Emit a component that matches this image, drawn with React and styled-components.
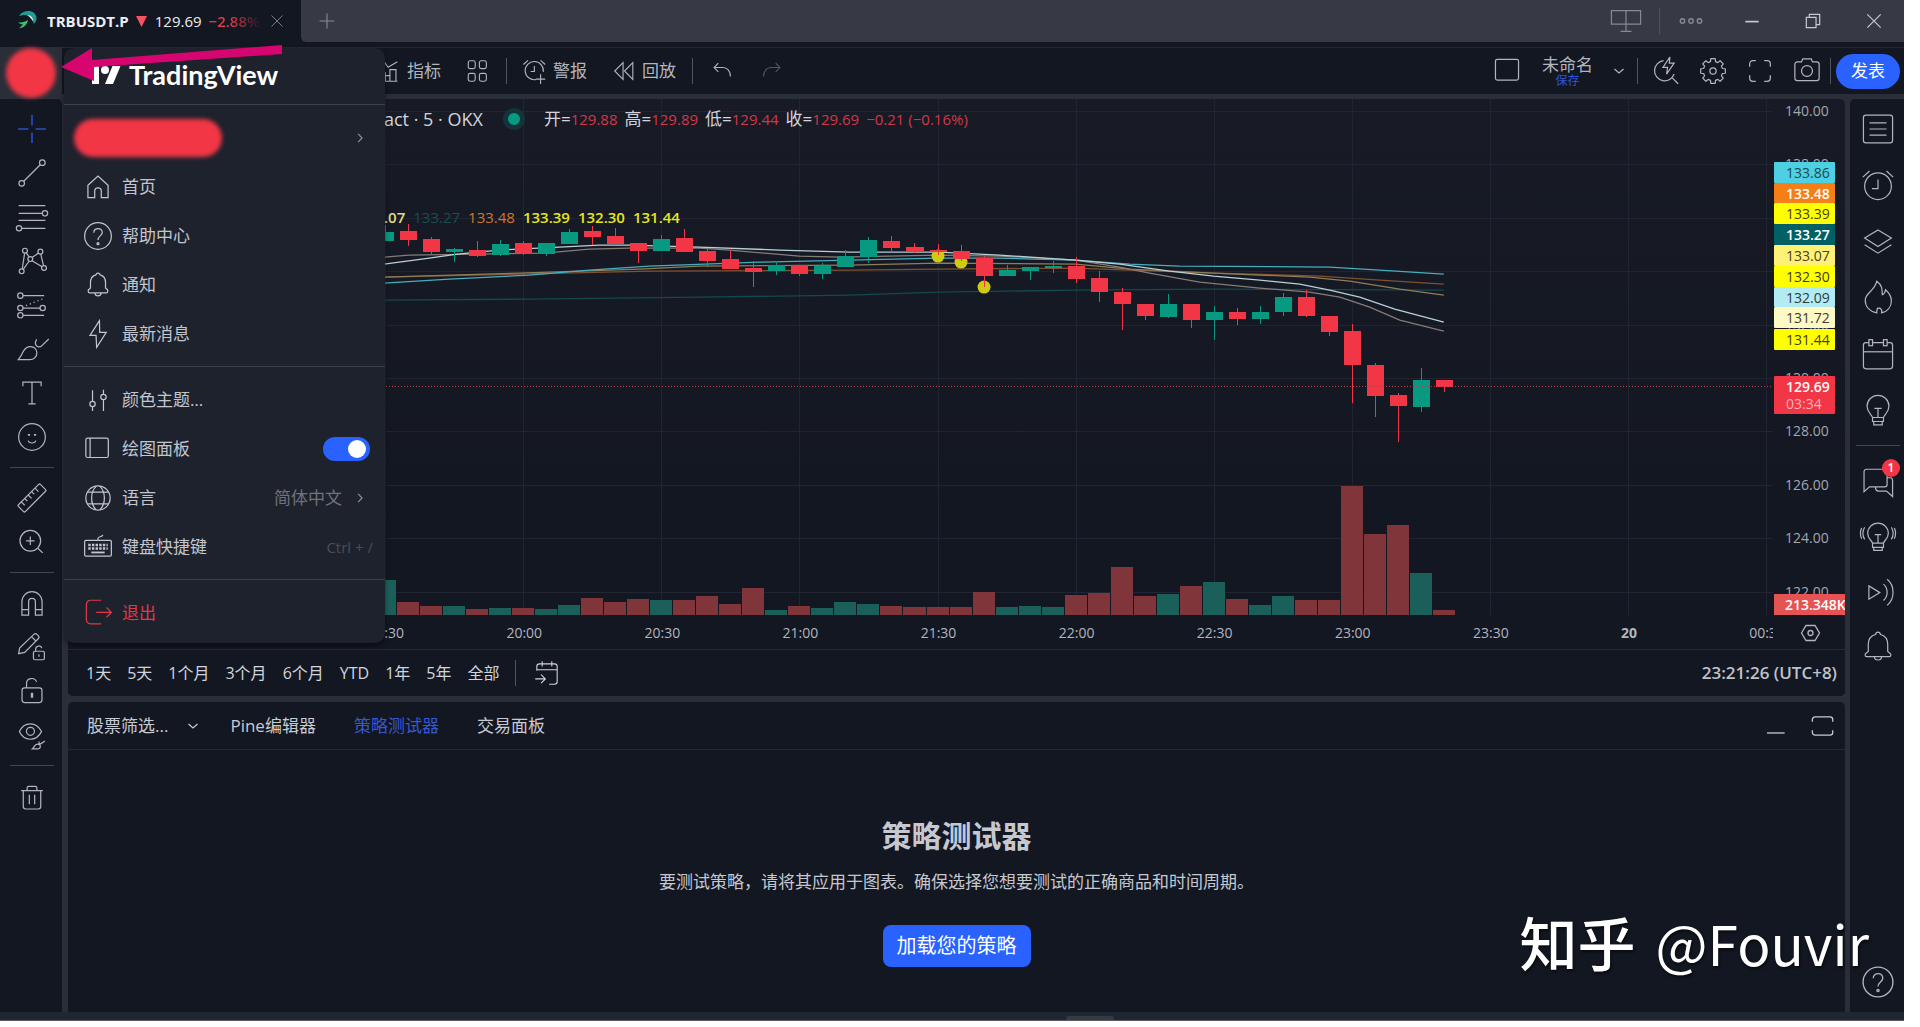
import React from "react";
import styled, { createGlobalStyle, css } from "styled-components";

const THEME = {
  bg: "#131722",
  gap: "#2a2e39",
  title: "#373a45",
  menu: "#1e222d",
  text: "#d1d4dc",
  icon: "#b2b5be",
  muted: "#787b86",
  faint: "#434651",
  blue: "#2962ff",
  red: "#f23645",
  green: "#089981",
};

const GlobalStyle = createGlobalStyle`
  * { box-sizing: border-box; }
  html, body, #root { height: 100%; }
  body {
    margin: 0;
    background: #fff;
    color: ${THEME.text};
    font-family: "Open Sans", "Noto Sans CJK SC", sans-serif;
    font-size: 17px;
    line-height: 24px;
    overflow: hidden;
  }
  button {
    margin: 0;
    padding: 0;
    border: 0;
    background: none;
    color: inherit;
    font: inherit;
    cursor: pointer;
  }
  svg { display: block; flex: none; }
`;

/* ---------- icons ---------- */

const gearPath = () => {
  const pts = [];
  for (let i = 0; i < 8; i += 1) {
    const a = (i * Math.PI) / 4 - Math.PI / 2;
    [
      [-0.26, 8],
      [-0.18, 10.3],
      [0.18, 10.3],
      [0.26, 8],
    ].forEach(([d, r]) => {
      pts.push(`${(14 + r * Math.cos(a + d)).toFixed(2)} ${(14 + r * Math.sin(a + d)).toFixed(2)}`);
    });
  }
  return `M${pts.join("L")}Z`;
};

const ICONS = {
  cross: <path strokeWidth="1.300" d="M2.500 14H11M17 14h8.500M14 2.500V11M14 17v8.500" />,
  trend: (
    <>
      <circle cx="5.500" cy="22.500" r="2.300" />
      <circle cx="22.500" cy="5.500" r="2.300" />
      <path d="M7.200 20.800 20.800 7.200" />
    </>
  ),
  fib: (
    <>
      <path d="M3 4.700h22M3 11h19.500M3 16.700h22M5.500 23.300H25" />
      <circle cx="24.700" cy="11" r="2.200" />
      <circle cx="3.300" cy="23.300" r="2.200" />
    </>
  ),
  pattern: (
    <>
      <path d="M6 20.400 7.900 7.700M9.300 7.300l2.300 3.300M14.100 11.200l5.200-3.700M21.200 8.300l2.300 9.500M11.700 14l-4.900 6.900M14 13.800l8.300 5" />
      <circle cx="8.200" cy="5.500" r="2" />
      <circle cx="20.900" cy="6.300" r="2" />
      <circle cx="12.600" cy="12.400" r="2" />
      <circle cx="5.500" cy="22.500" r="2" />
      <circle cx="23.900" cy="19.800" r="2" />
    </>
  ),
  forecast: (
    <>
      <path d="M6.600 6.300H24M6.600 16.500h14M6.600 22.500H24" />
      <path strokeDasharray="1 2.400" d="M9 14.500 24 8.500" />
      <circle cx="4.400" cy="6.300" r="2.200" />
      <circle cx="4.400" cy="16.500" r="2.200" />
      <circle cx="22.800" cy="16.500" r="2.200" />
      <circle cx="4.400" cy="22.500" r="2.200" />
    </>
  ),
  brush: (
    <path d="M2.700 22.800h9.500c3.500 0 5.800-2.600 5.800-5.600s-2.200-5.200-5.200-5.200-5 1.800-6.300 4.500c-.8 1.700-2 4.300-3.800 6.300zM27.800 5.800l-6.300 6c-1.500 1.200-4 .2-4.600-1.700-.4-1.600 0-2.600 1-4" />
  ),
  text: <path d="M6.500 8.500V5h15v3.500M14 5v18M11 23h6" />,
  smile: (
    <>
      <circle cx="14" cy="14" r="11" />
      <path d="M10.800 17c.9 2.600 5.500 2.600 6.400 0" />
      <path strokeWidth="1.800" d="M11.500 11.500v1.400M16.500 11.500v1.400" />
    </>
  ),
  ruler: (
    <g transform="rotate(-45 14 14)">
      <rect x="1.200" y="10" width="25.600" height="8" rx="1" />
      <path d="M5.500 10v4M9.500 10v3M13.500 10v4M17.500 10v3M21.500 10v4" />
    </g>
  ),
  zoom: (
    <>
      <circle cx="12.600" cy="13" r="8.500" />
      <path d="M12.600 9.500v7M9.100 13h7M18.800 19.200l4 3.800" />
    </>
  ),
  magnet: (
    <path d="M5.700 24V13a8.300 8.300 0 0 1 16.600 0v11h-5.500V13a2.800 2.800 0 0 0-5.600 0v11zM5.700 19.500h5.500M16.800 19.500h5.500" />
  ),
  pencilLock: (
    <>
      <path d="M3 19.500l.8-4.700L15.500 3.600c.8-.8 1.800-.8 2.600 0l1 1c.8.800.8 1.800 0 2.600L8 18.500zM13.600 5.500l3.600 3.600" />
      <rect x="15.200" y="17.500" width="9" height="7" rx="1.200" />
      <path d="M17 17.500v-1.800c0-3 4.500-3.400 5-.8M19.700 20v2" />
    </>
  ),
  lock: (
    <>
      <rect x="5.800" y="11.500" width="16.400" height="12" rx="2" />
      <path d="M9.500 11.500V7.800c0-4.700 6.800-5.600 8.300-1.300" />
      <path strokeWidth="2" d="M14 15.500v4" />
    </>
  ),
  eye: (
    <>
      <path d="M3.600 11.200C7.500 2.600 17.500 2.600 21.800 11.200 17.500 19.600 7.500 19.600 3.600 11.200z" />
      <circle cx="12.700" cy="11" r="3.300" />
      <path d="M14.300 25.500h4.200c3 0 3.200-4 .2-4s-2.500 2.500-4.400 4zM24.600 19l-3.400 2.300c-1 .3-1.900-.7-1.200-2" />
    </>
  ),
  trash: (
    <path d="M5 9.500h18M10 9.500V7.300c0-.8.500-1.300 1.300-1.300h5.400c.8 0 1.300.5 1.300 1.300v2.200M6.800 9.500v13.200c0 1.200.8 2 2 2h10.400c1.200 0 2-.8 2-2V9.500M11.800 13v7.800M16.200 13v7.800" />
  ),
  home: <path d="M5.700 12.500 14 5l8.300 7.500v10.200h-5.600v-5.400c0-3.400-5.400-3.400-5.400 0v5.400H5.700z" />,
  help: (
    <>
      <circle cx="14" cy="14" r="11" />
      <path d="M10.500 11.300c0-4.700 7.300-4.500 7 0-.2 2.600-3.500 2.800-3.500 6" />
      <circle cx="14" cy="20.300" r=".8" />
    </>
  ),
  bell: (
    <path d="M6 19.500v-1.300l1.800-1.700V12c0-3.500 1.800-5.700 4.500-6.400.3-1.900 3.100-1.900 3.400 0 2.700.7 4.500 2.900 4.500 6.400v4.500l1.800 1.700v1.300c0 .8-.5 1-1 1H7c-.6 0-1-.2-1-1zM11.500 21c.3 2.600 4.700 2.600 5 0" />
  ),
  flash: <path d="M15.200 3 7.400 15.200h5L12.900 25l7.900-12.400h-5.400z" />,
  sliders: (
    <>
      <path d="M9.500 6v9M9.500 19.500V23M18.500 5.500v4M18.500 13.500v9.500" />
      <circle cx="9.500" cy="17.300" r="2.200" />
      <circle cx="18.500" cy="11.500" r="2.200" />
    </>
  ),
  panel: (
    <>
      <rect x="4" y="5" width="18.500" height="16" rx="1.500" />
      <path d="M7.500 5v16" />
    </>
  ),
  globe: (
    <>
      <circle cx="14" cy="14" r="10" />
      <path d="M12.500 4.200c-5 5-5 14.600 0 19.600M15.500 4.200c5 5 5 14.600 0 19.600M5.500 9.200h17M5.500 18.800h17" />
    </>
  ),
  keyboard: (
    <>
      <rect x="3" y="8.500" width="22" height="13" rx="1" />
      <path d="M14 8.500V7c0-2 3.500-.8 4-3" />
      <path strokeWidth="2" strokeDasharray="2 1" d="M6 12.300h16M6 15.200h16" />
      <path strokeWidth="1.500" d="M8.500 18.500h11" />
    </>
  ),
  logout: <path d="M16.500 3.500H8A3.600 3.600 0 0 0 4.400 7.100v12.300A3.600 3.600 0 0 0 8 23h8.500M12.500 13.500H25M21 9.500l4 4-4 4" />,
  indicators: (
    <path d="M2 8.500 8.500 3.500 13 10 23 4M5 25v-9h5v9M10 25v-6h5v6M15 25V12.500h6.500V25M3.500 25H23" />
  ),
  templates: (
    <>
      <rect x="3.500" y="3" width="7.500" height="8.500" rx="2" />
      <rect x="15.500" y="3" width="7.500" height="8.500" rx="2" />
      <rect x="3.500" y="16.500" width="7.500" height="8.500" rx="2" />
      <rect x="15.500" y="16.500" width="7.500" height="8.500" rx="2" />
    </>
  ),
  alertAdd: (
    <path d="M15 23.200A9.800 9.800 0 1 1 22.900 15M13.300 8.500v6h-4M20 17.500V28M15 22.700h10M1.500 7 6.500 2.500M20 2.500 25 7" />
  ),
  rewind: <path d="M13 5v18L4 14zM23.500 5v18L14.500 14z" />,
  undo: <path d="M10 5.500 5.500 10.300 10 15M5.500 10.300H15c4.500 0 8 3.500 8 9.500" />,
  redo: <path d="M18 5.500l4.500 4.800L18 15M22.500 10.300H13c-4.500 0-8 3.500-8 9.500" />,
  layout: <rect x="4.500" y="4.500" width="19" height="17" rx="1.500" />,
  chevDown: <path d="M9.500 12l4.500 4 4.500-4" />,
  chevRight: <path d="M12 9.500l4.200 4.500-4.200 4.500" />,
  quickSearch: (
    <path d="M12 5.500a8.300 8.300 0 1 0 8.700 11M19 19.500l5 5M17.200 2.500l-5.700 8.500h3.800l-.8 5.500 6.200-9h-4z" />
  ),
  gear: (
    <>
      <path strokeLinejoin="round" d={gearPath()} />
      <circle cx="14" cy="14" r="2.600" />
    </>
  ),
  fullscreen: (
    <path d="M5.500 10.500V8A2.500 2.500 0 0 1 8 5.500h2.500M17.500 5.500H20A2.500 2.500 0 0 1 22.500 8v2.500M22.500 17.500V20a2.500 2.500 0 0 1-2.500 2.500h-2.500M10.500 22.500H8A2.500 2.500 0 0 1 5.500 20v-2.500" />
  ),
  camera: (
    <>
      <path d="M9.500 6.500l1-2.500h7l1 2.500H22a2 2 0 0 1 2 2V20a2 2 0 0 1-2 2H6a2 2 0 0 1-2-2V8.500a2 2 0 0 1 2-2z" />
      <circle cx="14" cy="14" r="4.500" />
    </>
  ),
  watchlist: (
    <>
      <rect x="2" y="2.500" width="24" height="23" rx="2" />
      <path d="M7 9h14M7 14h14M7 19h14" />
    </>
  ),
  alarm: (
    <>
      <circle cx="14" cy="15" r="11" />
      <path d="M14 9.500V17H9M1.500 7.500 7 2.500M21 2.500l5.500 5" />
    </>
  ),
  layers: <path d="M14 5 25 11.500 14 18.500 3 11.500zM3 17l11 7 11-7" />,
  fire: (
    <path d="M13 27C7 26 3.500 22 3.500 16.500c0-6 8-7.500 9.500-15.500 4.500 3 4.500 7 4.500 11 1.500-.5 2.500-2 2.700-4C23 10.500 25 13 25 17c0 5.500-3.500 9-8 10 .5-1.500 0-3-1.500-4-1 1-1.800-.5-2 .500-.3 1-.7 2-.5 3.500z" />
  ),
  calendar: (
    <>
      <rect x="2" y="5.500" width="24" height="21.500" rx="2" />
      <path d="M2 13h24" />
      <rect x="6.500" y="3" width="3" height="5" fill="#131722" />
      <rect x="18.500" y="3" width="3" height="5" fill="#131722" />
    </>
  ),
  bulb: (
    <path d="M9.500 21c-.5-2.500-4.500-4-4.500-9.300a9 9 0 0 1 18 0c0 5.300-4 6.800-4.500 9.300zM9.500 21v3.300h9V21M10.500 24.500V27h7v-2.500M14 20.500v-7M11 13.500h6" />
  ),
  chat: (
    <path d="M2.500 22V5.500C2.500 4.500 3.500 3.500 4.500 3.500h15c1.300 0 2 .8 2 2V16c0 1.300-.8 2-2 2H7zM12 18v1c0 1.500 1 2.500 2.500 2.500H21l5 4.500V12.500c0-1-.8-1.800-2-2h-2.500" />
  ),
  ideas: (
    <path d="M9.500 19c-.5-2-4-3.500-4-8a8.500 8.500 0 0 1 17 0c0 4.500-3.500 6-4 8zM9.500 19v3.500h9V19M10.500 22.500V25h7v-2.500M14 18.500V12M11.300 12h5.400M3 6c-1.800 3-1.800 7 0 10M.5 6.500c-1.300 3-1.300 6 0 9M25 6c1.800 3 1.800 7 0 10M27.500 6.500c1.300 3 1.300 6 0 9" />
  ),
  stream: <path d="M6.500 9v11l9-5.500zM18.500 7.500c4 3.500 4 10 0 13.500M21.500 3.500c6.500 5 6.500 16.500 0 21.500" />,
  bigBell: (
    <path d="M3.500 21v-1.300l2.500-2V12c0-4.500 2.500-7.500 6-8.300.3-2.600 3.700-2.600 4 0 3.500.8 6 3.800 6 8.300v5.700l2.500 2V21c0 .7-.5 1-1 1h-19c-.6 0-1-.3-1-1zM11 22c.3 3.600 5.700 3.600 6 0" />
  ),
  goTo: (
    <path d="M4.500 12V8c0-1.500 1-2.500 2.500-2.500h14c1.500 0 2.500 1 2.500 2.500v14c0 1.500-1 2.500-2.500 2.500h-5M9.500 3v5M18.500 3v5M4.500 11h19M3 19.500h9M8.500 15.500l4 4-4 4" />
  ),
  minimize: <path d="M6.500 20.500H23" />,
  maximize: <path d="M5 10V8a2.500 2.500 0 0 1 2.500-2.500h14A2.500 2.500 0 0 1 24 8v2M24 18v2a2.500 2.500 0 0 1-2.500 2.500h-14A2.500 2.500 0 0 1 5 20v-2" />,
  close: <path d="M8.500 8.500l11 11M19.500 8.500l-11 11" />,
  plus: <path d="M14 7.500v13M7.500 14h13" />,
  screens: <path d="M2 5.500h24v11H2zM14 5.500V22.500M9.500 22.500h9" />,
  dots: (
    <>
      <circle cx="5.500" cy="14" r="2.200" />
      <circle cx="14" cy="14" r="2.200" />
      <circle cx="22.500" cy="14" r="2.200" />
    </>
  ),
  winMin: <path d="M8.500 14.500h11" />,
  winRestore: <path d="M8.500 11h8v8.500h-8zM11 11V8.500h8.500V17h-3" />,
};

const Icon = ({ name, size = 34, stroke = 1 }) => (
  <svg
    width={size}
    height={size}
    viewBox="0 0 28 28"
    fill="none"
    stroke="currentColor"
    strokeWidth={stroke}
    overflow="visible"
    aria-hidden="true"
  >
    {ICONS[name]}
  </svg>
);

/* ---------- shell ---------- */

const Shell = styled.div`
  position: relative;
  display: flex;
  flex-direction: column;
  width: calc(100% - 16px);
  height: calc(100% - 6px);
  background: ${THEME.bg};
  overflow: hidden;
`;

const TitleBar = styled.header`
  display: flex;
  height: 42px;
  margin-bottom: 5px;
  flex: none;
`;

const Tab = styled.div`
  display: flex;
  align-items: center;
  width: 301px;
  padding: 0 10px 0 16px;
  background: ${THEME.bg};
  color: #eceef2;
  font-size: 15px;

  b {
    margin: 0 7px 0 9px;
  }

  button {
    margin-left: auto;
    color: ${THEME.muted};
  }
`;

const TabPrice = styled.span`
  margin: 0 7px 0 8px;
`;

const TabChange = styled.span`
  font-weight: 600;
  background: linear-gradient(90deg, #e03c4a 40%, #131722 105%);
  background-clip: text;
  color: transparent;
`;

const TitleRest = styled.div`
  display: flex;
  flex: 1;
  align-items: center;
  background: ${THEME.title};
  border-bottom-left-radius: 5px;
  color: #868993;
`;

const WindowButton = styled.button`
  display: grid;
  place-items: center;
  width: ${(p) => p.$width || 61}px;
  height: 42px;
  color: ${(p) => (p.$bright ? "#c5c8d0" : "inherit")};
  margin-left: ${(p) => (p.$push ? "auto" : 0)};
`;

const VLine = styled.span`
  flex: none;
  width: 1px;
  height: 26px;
  margin: 0 ${(p) => p.$gap || 0}px;
  background: #50535e;
`;

const Workspace = styled.div`
  display: grid;
  grid-template-columns: 62px 1fr;
  column-gap: 6px;
  flex: 1;
  min-height: 0;
  background: ${THEME.gap};
`;

/* ---------- side rails ---------- */

const LeftRail = styled.aside`
  display: flex;
  flex-direction: column;
  min-height: 0;
`;

const Avatar = styled.button`
  display: grid;
  place-items: center;
  height: 52px;
  flex: none;

  &::before {
    content: "";
    width: 50px;
    height: 50px;
    border-radius: 25px;
    background: ${THEME.red};
    filter: blur(2px);
  }
`;

const RailBody = styled.nav`
  display: flex;
  flex: 1;
  flex-direction: column;
  align-items: center;
  min-height: 0;
  padding: ${(p) => p.$top}px 0 0 2px;
  background: ${THEME.bg};
  border-radius: ${(p) => p.$radius};
  color: ${THEME.icon};
`;

const RailButton = styled.button`
  position: relative;
  display: grid;
  place-items: center;
  width: 100%;
  height: ${(p) => p.$height || 44}px;
  flex: none;
  color: ${(p) => (p.$active ? "#2c4fc4" : "inherit")};
  margin-top: ${(p) => (p.$bottom ? "auto" : 0)};
`;

const RailLine = styled.hr`
  width: 44px;
  height: 1px;
  flex: none;
  margin: 8px 0;
  border: 0;
  background: ${THEME.faint};
`;

const Badge = styled.span`
  position: absolute;
  top: 5px;
  right: 4px;
  width: 18px;
  height: 18px;
  border-radius: 9px;
  background: ${THEME.red};
  color: #fff;
  font-size: 12px;
  font-weight: 600;
  line-height: 18px;
`;

/* ---------- toolbar ---------- */

const Main = styled.div`
  display: flex;
  flex-direction: column;
  min-width: 0;
  min-height: 0;
`;

const Toolbar = styled.div`
  display: flex;
  align-items: center;
  height: 47px;
  flex: none;
  margin-bottom: 5px;
  margin-left: -6px;
  padding: 0 4px 0 302px;
  border-top: 1px solid #242833;
  background: ${THEME.bg};
  color: ${THEME.icon};
`;

const ToolButton = styled.button`
  display: flex;
  align-items: center;
  gap: 5px;
  padding: 0 12px;
  opacity: ${(p) => (p.$dim ? 0.4 : 1)};
`;

const IconButton = styled.button`
  display: grid;
  place-items: center;
  width: 47px;
  height: 46px;
`;

const Spacer = styled.span`
  flex: 1;
`;

const LayoutName = styled.button`
  display: flex;
  flex-direction: column;
  align-items: center;
  margin: 0 12px;
  line-height: 19px;

  small {
    color: #2f56d6;
    font-size: 12px;
    line-height: 13px;
  }
`;

const Publish = styled.button`
  width: 64px;
  height: 35px;
  margin-left: 5px;
  border-radius: 18px;
  background: ${THEME.blue};
  color: #fff;
`;

/* ---------- chart ---------- */

const Columns = styled.div`
  display: grid;
  grid-template-columns: minmax(0, 1fr) 54px;
  column-gap: 5px;
  flex: 1;
  min-height: 0;
`;

const Center = styled.div`
  display: flex;
  flex-direction: column;
  gap: 6px;
  min-height: 0;
`;

const ChartPanel = styled.section`
  flex: none;
  border-radius: 5px;
  overflow: hidden;
  background: linear-gradient(#181b26, #131722 70%);
`;

const ChartBody = styled.div`
  position: relative;
  display: grid;
  grid-template-columns: minmax(0, 1fr) 72px;
  height: 550px;
`;

const Legend = styled.div`
  position: absolute;
  left: 316px;
  top: 8px;
  display: flex;
  align-items: center;
`;

const SymbolName = styled.span`
  font-size: 18px;
  font-weight: 500;
`;

const LiveDot = styled.i`
  width: 22px;
  height: 22px;
  margin: 0 19px 0 20px;
  border: 5px solid #14343b;
  border-radius: 11px;
  background: ${THEME.green};
`;

const Ohlc = styled.span`
  margin-right: 7px;

  em {
    color: #d23746;
    font-size: 15px;
    font-style: normal;
  }
`;

const Averages = styled(Legend)`
  top: 106px;
  gap: 8px;
  font-size: 15px;
`;

const Average = styled.span`
  color: ${(p) => p.$color};
  font-weight: ${(p) => p.$weight};
`;

const RangeBar = styled.div`
  display: flex;
  align-items: center;
  gap: 16px;
  height: 47px;
  padding: 0 8px 0 18px;
  border-top: 1px solid #262a35;
  background: ${THEME.bg};
  font-size: 16px;
`;

const Clock = styled.button`
  margin-left: auto;
  color: #bfc2cb;
  font-size: 17px;
  font-weight: 600;
`;

// kind, body top, body bottom, wick top, wick bottom, volume top
const BARS = [
  ["g", 232, 241, 225, 241, 580],
  ["r", 231, 240, 224, 246, 602],
  ["r", 239, 252, 237, 254, 606],
  ["g", 249, 252, 248, 262, 606],
  ["r", 250, 256, 241, 257, 609],
  ["g", 244, 255, 240, 256, 608],
  ["r", 243, 254, 241, 255, 608],
  ["g", 243, 254, 243, 256, 609],
  ["g", 232, 244, 229, 244, 605],
  ["r", 231, 237, 226, 245, 598],
  ["r", 236, 244, 228, 244, 602],
  ["r", 243, 251, 243, 263, 599],
  ["g", 239, 251, 235, 251, 600],
  ["r", 238, 252, 229, 252, 600],
  ["r", 251, 261, 249, 267, 596],
  ["r", 259, 269, 250, 269, 604],
  ["r", 268, 272, 261, 287, 588],
  ["g", 265, 271, 261, 275, 610],
  ["r", 265, 274, 265, 276, 606],
  ["g", 266, 274, 263, 279, 608],
  ["g", 256, 267, 250, 267, 602],
  ["g", 240, 257, 237, 263, 604],
  ["r", 241, 248, 236, 252, 606],
  ["r", 247, 252, 243, 253, 607],
  ["r", 250, 252, 244, 255, 607],
  ["r", 251, 259, 245, 261, 607],
  ["r", 258, 276, 256, 287, 592],
  ["g", 270, 276, 265, 276, 607],
  ["g", 267, 271, 267, 280, 606],
  ["g", 266, 268, 261, 273, 607],
  ["r", 266, 279, 257, 283, 595],
  ["r", 278, 292, 271, 302, 593],
  ["r", 292, 304, 288, 330, 567],
  ["r", 304, 316, 304, 320, 596],
  ["g", 304, 317, 294, 318, 594],
  ["r", 304, 320, 304, 328, 586],
  ["g", 312, 320, 306, 340, 582],
  ["r", 312, 319, 308, 325, 599],
  ["g", 312, 319, 306, 324, 605],
  ["g", 297, 312, 293, 316, 596],
  ["r", 297, 316, 290, 317, 600],
  ["r", 316, 332, 316, 336, 600],
  ["r", 331, 365, 324, 403, 486],
  ["r", 365, 396, 363, 417, 534],
  ["r", 395, 406, 393, 442, 525],
  ["g", 380, 407, 368, 412, 573],
  ["r", 380, 387, 380, 392, 610],
];

const LINES = [
  ["#124a4d", "385,300 530,299 700,297 850,295 939,292 1076,290 1214,289 1444,290"],
  ["#80502f", "385,277 520,274 650,271 850,270 939,269 1076,268 1130,270 1214,273 1320,276 1380,280 1444,284"],
  ["#8f7d57", "385,277 520,273 640,269 700,266 850,265 939,263 1076,264 1130,269 1214,273 1310,277 1350,281 1400,289 1444,295"],
  ["#45aebd", "385,283 450,279 530,275 590,270 650,266 760,262 850,260 939,258 1000,258 1076,260 1130,264 1180,266 1330,267 1380,270 1444,274"],
  ["#857c76", "385,257 410,255 480,254 545,253 590,249 630,248 700,248 730,250 800,256 840,257 939,255 1000,256 1076,260 1120,267 1150,273 1200,282 1260,288 1310,292 1340,297 1370,307 1400,320 1444,331"],
  ["#b7d0d6", "385,264 430,258 458,254 500,250 560,247 600,245 630,245 700,247 780,250 850,252 939,252 1000,255 1076,260 1120,264 1170,271 1214,276 1260,280 1300,284 1330,290 1360,297 1395,309 1444,322"],
];

const TIMES = ["19:30", "20:00", "20:30", "21:00", "21:30", "22:00", "22:30", "23:00", "23:30", "20", "00:30"];
const PRICES = [140, 138, 136, 134, 132, 130, 128, 126, 124, 122];
// these two sit fully behind the indicator tags
const COVERED = [136, 134];
const priceY = (price) => Math.round(111 + (140 - price) * 26.7);
const barX = (i) => 386 + i * 23;

const SIGNALS = [
  [24, 256],
  [25, 262],
  [26, 287],
];

const Plot = () => (
  <svg width="100%" height="550" viewBox="69 99 1704 550" preserveAspectRatio="xMinYMin slice">
    <g stroke="#212531" shapeRendering="crispEdges">
      {PRICES.map((p) => (
        <path key={p} d={`M69 ${priceY(p) + 0.5}H1773`} />
      ))}
      {TIMES.map((t, i) => (
        <path key={t} d={`M${386.5 + i * 138} 99V615`} />
      ))}
    </g>
    <g shapeRendering="crispEdges">
      {BARS.map(([kind, , , , , v], i) => (
        <rect key={i} x={barX(i) - 11} y={v} width="22" height={615 - v} fill={kind === "r" ? "#7f3539" : "#1b5f5b"} />
      ))}
    </g>
    {LINES.map(([color, points]) => (
      <polyline key={color} points={points} fill="none" stroke={color} strokeWidth="1.300" />
    ))}
    {SIGNALS.map(([i, y]) => (
      <circle key={i} cx={barX(i) + 0.5} cy={y} r="6.500" fill="#cfcb14" />
    ))}
    <g shapeRendering="crispEdges">
      {BARS.map(([kind, top, bottom, high, low], i) => (
        <g key={i} fill={kind === "r" ? THEME.red : THEME.green}>
          <rect x={barX(i)} y={high} width="1" height={low - high} />
          <rect x={barX(i) - 8} y={top} width="17" height={bottom - top} />
        </g>
      ))}
    </g>
    <path d="M69 386.500H1773" stroke="#b93a48" strokeDasharray="1 2" shapeRendering="crispEdges" />
    <g fill={THEME.icon} fontSize="14" textAnchor="middle">
      {TIMES.map((t, i) => (
        <text key={t} x={387 + i * 138} y="638" fontWeight={t === "20" ? 700 : 500}>
          {t}
        </text>
      ))}
    </g>
  </svg>
);

// label, top, height, background, text colour, weight
const TAGS = [
  ["133.86", 162, 21, "#4dd0e1", "#1a4a54", 500],
  ["133.48", 183, 20, "#f57f17", "#fff", 600],
  ["133.39", 203, 21, "#ffff00", "#3f3f0c", 500],
  ["133.27", 224, 21, "#006064", "#fff", 600],
  ["133.07", 245, 21, "#fff176", "#46421f", 500],
  ["132.30", 266, 21, "#ffff00", "#3f3f0c", 500],
  ["132.09", 287, 20, "#b2ebf2", "#2b3d41", 500],
  ["131.72", 307, 21, "#fff9c4", "#403e30", 500],
  ["131.44", 329, 21, "#ffff00", "#3f3f0c", 500],
];

const PriceScale = () => (
  <svg width="72" height="550" viewBox="1773 99 72 550" fontSize="14">
    <g fill="#a3a6af" fontWeight="500">
      {PRICES.filter((p) => !COVERED.includes(p)).map((p) => (
        <text key={p} x="1785" y={priceY(p) + 5}>
          {p.toFixed(2)}
        </text>
      ))}
    </g>
    {TAGS.map(([label, y, h, bg, color, weight]) => (
      <g key={label}>
        <rect x="1774" y={y} width="61" height={h} rx="1" fill={bg} />
        <text x="1786" y={y + 16} fill={color} fontWeight={weight}>
          {label}
        </text>
      </g>
    ))}
    <rect x="1774" y="376" width="61" height="38" rx="1" fill={THEME.red} />
    <text x="1786" y="392" fill="#fff" fontWeight="600">129.69</text>
    <text x="1786" y="409" fill="#fbb5bb" fontWeight="500">03:34</text>
    <rect x="1774" y="594" width="71" height="21" fill="#e65353" />
    <text x="1785" y="610" fill="#fff" fontWeight="600">213.348K</text>
    <g fill="none" stroke={THEME.icon} strokeWidth="1.300">
      <path d="M1801.500 633l4.500-7.500h9l4.500 7.500-4.500 7.500h-9z" />
      <circle cx="1810.500" cy="633" r="2.500" />
    </g>
  </svg>
);

/* ---------- bottom panel ---------- */

const BottomPanel = styled.section`
  display: flex;
  flex: 1;
  flex-direction: column;
  min-height: 0;
  border-radius: 5px 5px 0 0;
  background: ${THEME.bg};
`;

const BottomTabs = styled.div`
  display: flex;
  align-items: center;
  height: 48px;
  flex: none;
  padding: 0 0 0 19px;
  border-bottom: 1px solid #262a35;
  color: #c8cbd3;
`;

const BottomTab = styled.button`
  display: flex;
  align-items: center;
  margin-right: ${(p) => p.$gap || 38}px;
  color: ${(p) => (p.$active ? "#3558d4" : "inherit")};

  svg {
    margin-left: 11px;
  }
`;

const Empty = styled.div`
  display: flex;
  flex-direction: column;
  align-items: center;
  padding-top: 68px;

  h2 {
    margin: 0 0 16px;
    color: #c6c8d1;
    font-size: 30px;
    font-weight: 700;
    line-height: 36px;
  }

  p {
    margin: 0 0 31px;
    color: #c6c8d1;
  }

  button {
    height: 42px;
    padding: 0 14px;
    border-radius: 8px;
    background: ${THEME.blue};
    color: #fff;
    font-size: 20px;
  }
`;

const Taskbar = styled.footer`
  display: flex;
  justify-content: center;
  height: 9px;
  flex: none;
  padding-left: 276px;
  background: #1f2732;
  border-bottom: 1px solid #5a5d60;

  &::after {
    content: "";
    align-self: end;
    width: 48px;
    height: 4px;
    background: #343b45;
    border-radius: 3px 3px 0 0;
  }
`;

/* ---------- main menu ---------- */

const Menu = styled.div`
  position: absolute;
  left: 64px;
  top: 48px;
  width: 321px;
  padding-bottom: 6px;
  border-radius: 10px;
  background: ${THEME.menu};
  box-shadow: 0 3px 5px rgba(0, 0, 0, 0.45);
  color: #c3c6cf;
`;

const Brand = styled.div`
  display: flex;
  align-items: center;
  gap: 8px;
  height: 56px;
  padding: 0 0 2px 21px;
  color: #fff;
  font-family: Lato, sans-serif;
  font-size: 27px;
  font-weight: 700;
`;

const MenuGroup = styled.div`
  padding: 8px 0;
  border-top: 1px solid #3c404b;

  &:last-child {
    padding-bottom: 0;
  }
`;

const rowStyles = css`
  display: flex;
  align-items: center;
  width: 100%;
  height: 49px;
  padding: 0 12px 0 17px;
  text-align: left;
`;

const MenuRow = styled.button`
  ${rowStyles}
  color: ${(p) => (p.$danger ? "#e2384a" : "inherit")};

  > svg:last-child {
    color: #8b8e98;
  }
`;

const SwitchRow = styled.label`
  ${rowStyles}
  cursor: pointer;
`;

const MenuLabel = styled.span`
  flex: 1;
  margin-left: 7px;
`;

const MenuHint = styled.span`
  margin-right: 5px;
  color: #70737e;
`;

const Shortcut = styled.span`
  color: #4a4d58;
  font-size: 15px;
`;

const Redacted = styled.span`
  width: 148px;
  height: 38px;
  margin: 0 auto 0 -7px;
  border-radius: 19px;
  background: ${THEME.red};
  filter: blur(2px);
`;

const Switch = styled.input`
  appearance: none;
  position: relative;
  width: 47px;
  height: 24px;
  margin: 0 3px 0 0;
  border-radius: 12px;
  background: ${THEME.blue};

  &::after {
    content: "";
    position: absolute;
    top: 3px;
    right: 4px;
    width: 18px;
    height: 18px;
    border-radius: 9px;
    background: #fff;
  }
`;

const Arrow = styled.svg`
  position: absolute;
  left: 60px;
  top: 40px;
`;

const Watermark = styled.div`
  position: absolute;
  right: 35px;
  bottom: 45px;
  display: flex;
  align-items: baseline;
  gap: 20px;
  color: #fff;
  font-family: "Noto Sans CJK SC", sans-serif;
  font-size: 55px;
  line-height: 68px;
  text-shadow: 1px 2px 3px rgba(0, 0, 0, 0.6);
  pointer-events: none;

  b {
    font-size: 58px;
    font-weight: 500;
  }
`;

const LEFT_TOOLS = [
  ["cross", "trend", "fib", "pattern", "forecast", "brush", "text", "smile"],
  ["ruler", "zoom"],
  ["magnet", "pencilLock", "lock", "eye"],
  ["trash"],
];
const RANGES = ["1天", "5天", "1个月", "3个月", "6个月", "YTD", "1年", "5年", "全部"];
const OHLC = [
  ["开", "129.88"],
  ["高", "129.89"],
  ["低", "129.44"],
  ["收", "129.69"],
];
const AVERAGES = [
  [".07", "#e0da83", 600],
  ["133.27", "#154f52", 500],
  ["133.48", "#d4752b", 500],
  ["133.39", "#e6e61c", 600],
  ["132.30", "#e6e61c", 600],
  ["131.44", "#e6e61c", 600],
];

const MainMenu = () => (
  <Menu>
    <Brand>
      <svg width="36" height="18" viewBox="0 4 36 18" fill="currentColor">
        <path d="M14 22H7V11H0V4h14zM28 22h-8l7.500-18h8z" />
        <circle cx="20" cy="8" r="4" />
      </svg>
      TradingView
    </Brand>
    <MenuGroup>
      <MenuRow aria-label="account">
        <Redacted />
        <Icon name="chevRight" size={26} stroke={1.3} />
      </MenuRow>
      {[
        ["home", "首页"],
        ["help", "帮助中心"],
        ["bell", "通知"],
        ["flash", "最新消息"],
      ].map(([icon, label]) => (
        <MenuRow key={icon}>
          <Icon name={icon} />
          <MenuLabel>{label}</MenuLabel>
        </MenuRow>
      ))}
    </MenuGroup>
    <MenuGroup>
      <MenuRow>
        <Icon name="sliders" />
        <MenuLabel>颜色主题…</MenuLabel>
      </MenuRow>
      <SwitchRow>
        <Icon name="panel" />
        <MenuLabel>绘图面板</MenuLabel>
        <Switch type="checkbox" defaultChecked />
      </SwitchRow>
      <MenuRow>
        <Icon name="globe" />
        <MenuLabel>语言</MenuLabel>
        <MenuHint>简体中文</MenuHint>
        <Icon name="chevRight" size={26} stroke={1.3} />
      </MenuRow>
      <MenuRow>
        <Icon name="keyboard" />
        <MenuLabel>键盘快捷键</MenuLabel>
        <Shortcut>Ctrl + /</Shortcut>
      </MenuRow>
    </MenuGroup>
    <MenuGroup>
      <MenuRow $danger>
        <Icon name="logout" />
        <MenuLabel>退出</MenuLabel>
      </MenuRow>
    </MenuGroup>
  </Menu>
);

const App = () => (
  <>
    <GlobalStyle />
    <Shell>
      <TitleBar>
        <Tab>
          <svg width="22" height="22" viewBox="0 0 22 22">
            <path d="M3 6C7-1 20-1 20.500 8c0 3-1.500 5-3 6 .5-5-3-9-8-9-2.500 0-4.500.5-6.500 1z" fill="#1f9d92" />
            <path d="M11 5c4 0 6.500 3 6.300 7-1.300-3-3.300-5-6.300-7z" fill="#e9f6f5" />
            <path d="M2 12.500c4 0 7-.5 10-2.500-1 5-4 7.500-9 8.500l4-4c-2-.3-3.500-.8-5-2z" fill="#35c46f" />
          </svg>
          <b>TRBUSDT.P</b>
          <svg width="11" height="11" viewBox="0 0 11 11">
            <path d="M0 0h11L5.500 11z" fill="#f7525f" />
          </svg>
          <TabPrice>129.69</TabPrice>
          <TabChange>−2.88%</TabChange>
          <button aria-label="close tab">
            <Icon name="close" size={28} />
          </button>
        </Tab>
        <TitleRest>
          <WindowButton $width={52} aria-label="new tab">
            <Icon name="plus" size={32} />
          </WindowButton>
          <WindowButton $push $width={66} aria-label="screens">
            <Icon name="screens" />
          </WindowButton>
          <VLine />
          <WindowButton aria-label="more">
            <Icon name="dots" size={28} stroke={1.4} />
          </WindowButton>
          <WindowButton $bright aria-label="minimize">
            <Icon name="winMin" stroke={1.4} />
          </WindowButton>
          <WindowButton $bright aria-label="restore">
            <Icon name="winRestore" />
          </WindowButton>
          <WindowButton $bright aria-label="close">
            <Icon name="close" />
          </WindowButton>
        </TitleRest>
      </TitleBar>

      <Workspace>
        <LeftRail>
          <Avatar aria-label="main menu" />
          <RailBody $top={8} $radius="0 5px 0 0">
            {LEFT_TOOLS.map((group, i) => (
              <React.Fragment key={group[0]}>
                {i > 0 && <RailLine />}
                {group.map((name) => (
                  <RailButton key={name} $active={name === "cross"} aria-label={name}>
                    <Icon name={name} />
                  </RailButton>
                ))}
              </React.Fragment>
            ))}
          </RailBody>
        </LeftRail>

        <Main>
          <Toolbar>
            <ToolButton>
              <Icon name="indicators" size={26} stroke={1.2} />
              指标
            </ToolButton>
            <ToolButton aria-label="templates">
              <Icon name="templates" size={26} stroke={1.2} />
            </ToolButton>
            <VLine $gap={3} />
            <ToolButton>
              <Icon name="alertAdd" size={26} stroke={1.2} />
              警报
            </ToolButton>
            <ToolButton>
              <Icon name="rewind" size={26} stroke={1.2} />
              回放
            </ToolButton>
            <VLine $gap={4} />
            <ToolButton aria-label="undo">
              <Icon name="undo" size={26} stroke={1.2} />
            </ToolButton>
            <ToolButton $dim aria-label="redo">
              <Icon name="redo" size={26} stroke={1.2} />
            </ToolButton>
            <Spacer />
            <IconButton aria-label="layout">
              <Icon name="layout" />
            </IconButton>
            <LayoutName>
              未命名
              <small>保存</small>
            </LayoutName>
            <button aria-label="layouts">
              <Icon name="chevDown" size={28} stroke={1.2} />
            </button>
            <VLine $gap={4} />
            {["quickSearch", "gear", "fullscreen", "camera"].map((name) => (
              <IconButton key={name} aria-label={name}>
                <Icon name={name} />
              </IconButton>
            ))}
            <VLine />
            <Publish>发表</Publish>
          </Toolbar>

          <Columns>
            <Center>
              <ChartPanel>
                <ChartBody>
                  <Plot />
                  <PriceScale />
                  <Legend>
                    <SymbolName>act · 5 · OKX</SymbolName>
                    <LiveDot />
                    {OHLC.map(([label, value]) => (
                      <Ohlc key={label}>
                        {label}=<em>{value}</em>
                      </Ohlc>
                    ))}
                    <Ohlc>
                      <em>−0.21 (−0.16%)</em>
                    </Ohlc>
                  </Legend>
                  <Averages>
                    {AVERAGES.map(([value, color, weight]) => (
                      <Average key={value} $color={color} $weight={weight}>
                        {value}
                      </Average>
                    ))}
                  </Averages>
                </ChartBody>
                <RangeBar>
                  {RANGES.map((range) => (
                    <button key={range}>{range}</button>
                  ))}
                  <VLine />
                  <button aria-label="go to date">
                    <Icon name="goTo" size={30} />
                  </button>
                  <Clock>23:21:26 (UTC+8)</Clock>
                </RangeBar>
              </ChartPanel>

              <BottomPanel>
                <BottomTabs>
                  <BottomTab $gap={23}>
                    股票筛选...
                    <Icon name="chevDown" size={28} stroke={1.2} />
                  </BottomTab>
                  <BottomTab>Pine编辑器</BottomTab>
                  <BottomTab $active>策略测试器</BottomTab>
                  <BottomTab>交易面板</BottomTab>
                  <Spacer />
                  <IconButton aria-label="minimize panel">
                    <Icon name="minimize" size={30} stroke={1.2} />
                  </IconButton>
                  <IconButton aria-label="maximize panel">
                    <Icon name="maximize" size={30} stroke={1.2} />
                  </IconButton>
                </BottomTabs>
                <Empty>
                  <h2>策略测试器</h2>
                  <p>要测试策略，请将其应用于图表。确保选择您想要测试的正确商品和时间周期。</p>
                  <button>加载您的策略</button>
                </Empty>
              </BottomPanel>
            </Center>

            <RailBody as="aside" $top={2} $radius="5px 0 0 0">
              {["watchlist", "alarm", "layers", "fire", "calendar", "bulb"].map((name) => (
                <RailButton key={name} $height={56} aria-label={name}>
                  <Icon name={name} />
                </RailButton>
              ))}
              <RailLine />
              {["chat", "ideas", "stream", "bigBell"].map((name) => (
                <RailButton key={name} $height={55} aria-label={name}>
                  <Icon name={name} />
                  {name === "chat" && <Badge>1</Badge>}
                </RailButton>
              ))}
              <RailButton $bottom $height={60} aria-label="help">
                <Icon name="help" size={38} />
              </RailButton>
            </RailBody>
          </Columns>
        </Main>
      </Workspace>
      <Taskbar />

      <MainMenu />
      <Arrow width="224" height="44" viewBox="60 40 224 44">
        <path d="M61 67 92 48v12l190-15v9L94 67v14z" fill="#d6056f" />
      </Arrow>
      <Watermark>
        <b>知乎</b>
        <span>@Fouvir</span>
      </Watermark>
    </Shell>
  </>
);

export default App;
